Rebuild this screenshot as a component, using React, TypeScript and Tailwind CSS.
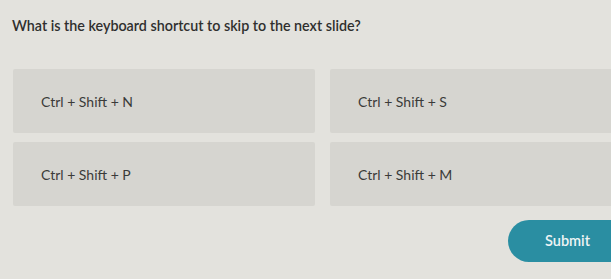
const options = ["Ctrl + Shift + N", "Ctrl + Shift + S", "Ctrl + Shift + P", "Ctrl + Shift + M"];

export default function App() {
  return (
    <div
      className="h-[279px] w-[611px] overflow-hidden bg-[#e3e2dd] text-[#3a3a38]"
      style={{ fontFamily: "Lato, 'Open Sans', sans-serif" }}
    >
      <h1 className="pl-[12px] pt-[16px] text-[14.3px] font-semibold leading-[20px] text-[#2f2f2e]">
        What is the keyboard shortcut to skip to the next slide?
      </h1>

      <div className="mt-[33px] ml-[13px] grid w-[620px] grid-cols-[302px_302px] gap-x-[15px] gap-y-[9px]">
        {options.map((o) => (
          <div
            key={o}
            className="flex h-[64px] items-center rounded-[2px] bg-[#d6d5d0] pl-[28px] text-[14px] text-[#3b3b39]"
          >
            {o}
          </div>
        ))}
      </div>

      <div className="mt-[14px] flex justify-end">
        <button className="mr-[-20px] h-[42px] w-[123px] rounded-full bg-[#2a8ea2] pr-[4px] text-[14.5px] font-semibold text-[#eef4f5]">
          Submit
        </button>
      </div>
    </div>
  );
}
